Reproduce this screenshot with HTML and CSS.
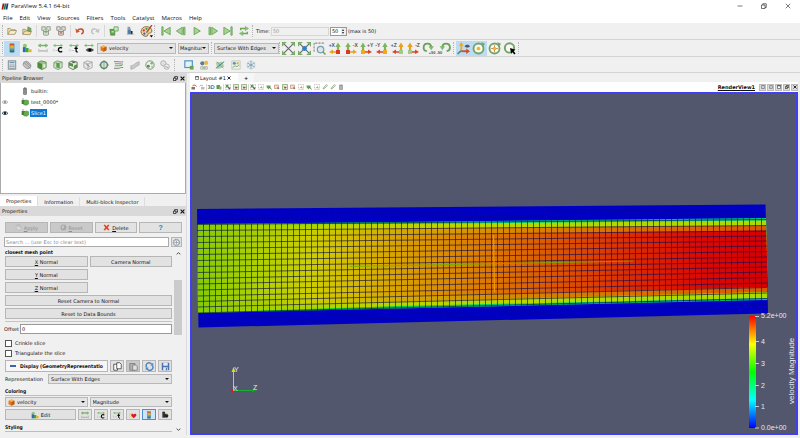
FILE: index.html
```html
<!DOCTYPE html>
<html lang="en">
<head>
<meta charset="utf-8">
<title>ParaView 5.4.1 64-bit</title>
<link rel="stylesheet" href="styles.css">
</head>
<body>
<svg class="defs" aria-hidden="true">
  <defs>
    <linearGradient id="rainbow" x1="0" y1="1" x2="0" y2="0">
      <stop offset="0" stop-color="#0000ff"/><stop offset=".25" stop-color="#00ffff"/><stop offset=".5" stop-color="#00ff00"/><stop offset=".75" stop-color="#ffff00"/><stop offset="1" stop-color="#ff0000"/>
    </linearGradient>
    <linearGradient id="barfill" x1="0" y1="0" x2="0" y2="1">
      <stop offset="0" stop-color="#e03020"/><stop offset=".35" stop-color="#f0c020"/><stop offset=".65" stop-color="#40b0a0"/><stop offset="1" stop-color="#2050c0"/>
    </linearGradient>
  </defs>
  <symbol id="logo" viewBox="0 0 12 12"><path d="M2 1h3L3 11H0z" fill="#b01020"/><path d="M5.500 1h3l-2 10h-3z" fill="#208040"/><path d="M9 1h3l-2 10H7z" fill="#203878"/></symbol>
  <symbol id="open" viewBox="0 0 12 12"><path d="M1 10V3h3l1 1.500h5V6" fill="#f6e6b0" stroke="#8a7a50" stroke-width=".8"/><path d="M1 10l2.500-4.500H11.500L9.500 10z" fill="#faeec8" stroke="#8a7a50" stroke-width=".8"/></symbol>
  <symbol id="saveData" viewBox="0 0 12 12"><path d="M1 10V4h3l1 1h5v1" fill="#f6e6b0" stroke="#8a7a50" stroke-width=".8"/><path d="M1 10l2-4h8.500L9.500 10.500z" fill="#f4dfa0" stroke="#8a7a50" stroke-width=".8"/><path d="M7 1l4 2-1 4-3-1z" fill="#7da565" stroke="#557a44" stroke-width=".6"/></symbol>
  <symbol id="connect" viewBox="0 0 12 12"><g fill="#dfe5d8" stroke="#6d7a66" stroke-width=".8"><rect x="1" y="1" width="4" height="4"/><rect x="7" y="1" width="4" height="4"/><path d="M3 5v2h6V5"/><rect x="3" y="7" width="6" height="4" rx="1"/></g><path d="M6 5v4" stroke="#69a151"/></symbol>
  <symbol id="disconnect" viewBox="0 0 12 12"><g fill="#dfe0d8" stroke="#756f68" stroke-width=".8"><rect x="1" y="1" width="4" height="4"/><rect x="7" y="1" width="4" height="4"/><path d="M3 5v2h6V5"/><rect x="3" y="7" width="6" height="4" rx="1"/></g><path d="M4 6l4 4M8 6l-4 4" stroke="#c9604e"/></symbol>
  <symbol id="undo" viewBox="0 0 12 12"><path d="M3 5.500C5 2.500 10 3 10 6.500 10 8 9 9 7.500 9.500" fill="none" stroke="#c84a26" stroke-width="1.800"/><path d="M0.500 3l1 5.500L6 6.500z" fill="#d4552c"/></symbol>
  <symbol id="redo" viewBox="0 0 12 12"><path d="M9 5.500C7 2.500 2 3 2 6.500 2 8 3 9 4.500 9.500" fill="none" stroke="#bdbdbd" stroke-width="1.600"/><path d="M11.500 3l-1 5.500L6 6.500z" fill="#c4c4c4"/></symbol>
  <symbol id="autoApply" viewBox="0 0 12 12"><path d="M1 4h6v7H2z" fill="#65a650" stroke="#3c7a30" stroke-width=".7"/><path d="M6 1h5v5H6z" fill="#cfe8c4" stroke="#4b9140" stroke-width=".8"/><path d="M3 7h3" stroke="#fff"/></symbol>
  <symbol id="find" viewBox="0 0 12 12"><path d="M3 1h3l1 3H3z" fill="#9a9a9a"/><path d="M3 4h4v6H3z" fill="#4a7cb0"/><path d="M7 6h2v4H7z" fill="#222"/><path d="M2 10h9" stroke="#bbb"/></symbol>
  <symbol id="palette" viewBox="0 0 12 12"><path d="M6 1.500c3 0 5 2 5 4s-2 2-3 2 0 3-2.500 3S1 8.500 1 6s2-4.500 5-4.500z" fill="#e8d3a8" stroke="#94693a" stroke-width=".9"/><circle cx="3.500" cy="5" r="1" fill="#c33"/><circle cx="6" cy="3.500" r="1" fill="#36a04a"/><circle cx="4" cy="8" r="1" fill="#2f62b5"/><path d="M11 0L6 7" stroke="#a4502a" stroke-width="1.200"/><path d="M9 9.500h3l-1.500 2z" fill="#000"/></symbol>
  <symbol id="first" viewBox="0 0 12 12"><path d="M1 1h1.500v10H1zM11 1.500v9L3.500 6z" fill="#a9d293" stroke="#579a45" stroke-width=".9"/></symbol>
  <symbol id="prev" viewBox="0 0 12 12"><path d="M7.500 1.500v9L0.500 6zM9 1.500h1.800v9H9z" fill="#a9d293" stroke="#579a45" stroke-width=".9"/></symbol>
  <symbol id="play" viewBox="0 0 12 12"><path d="M2.500 1.500v9L10 6z" fill="#a9d293" stroke="#579a45" stroke-width=".9"/></symbol>
  <symbol id="next" viewBox="0 0 12 12"><path d="M4.500 1.500v9L11.500 6zM1.200 1.500H3v9H1.200z" fill="#a9d293" stroke="#579a45" stroke-width=".9"/></symbol>
  <symbol id="last" viewBox="0 0 12 12"><path d="M9.500 1H11v10H9.500zM1 1.500v9L8.500 6z" fill="#a9d293" stroke="#579a45" stroke-width=".9"/></symbol>
  <symbol id="loop" viewBox="0 0 12 12"><g fill="none" stroke="#6da75a" stroke-width="1.700"><path d="M2 5V3h6M10 7v2H4"/></g><path d="M7.500 0.500L11.500 3l-4 2.500zM4.500 6.500L.5 9l4 2.500z" fill="#8fc47a" stroke="#579a45" stroke-width=".5"/></symbol>
  <symbol id="bar" viewBox="0 0 12 12"><rect x="3.500" y="1" width="5" height="10" fill="url(#barfill)" stroke="#5b6a70" stroke-width=".5"/></symbol>
  <symbol id="editColor" viewBox="0 0 12 12"><circle cx="3.500" cy="3.500" r="2.500" fill="#8bc97a"/><path d="M1 5h3.500v6H1z" fill="#3568b0"/><path d="M4.500 6H8v5H4.500z" fill="#3fa34c"/><path d="M8 7.500h3.500V11H8z" fill="#e8b324"/></symbol>
  <symbol id="rescale" viewBox="0 0 12 12"><path d="M0 3l3-2v1.300h6V1l3 2-3 2V3.700H3V5z" fill="#7fbf68" stroke="#5c9c48" stroke-width=".4"/><path d="M1 7v4M11 7v4M1 9.500h10M3.500 8.500v2M6 8.500v2M8.500 8.500v2" stroke="#9a9a9a" stroke-width=".7"/></symbol>
  <symbol id="rescaleC" viewBox="0 0 12 12"><path d="M0 3l3-2v1.300h6V1l3 2-3 2V3.700H3V5z" fill="#7fbf68"/><path d="M1 7v3M3 9h3" stroke="#aaa" stroke-width=".7"/><path d="M11 6C8 4.500 6.500 6.500 6.500 8.200S8.500 11.500 11 10" fill="none" stroke="#000" stroke-width="1.600"/></symbol>
  <symbol id="rescaleT" viewBox="0 0 12 12"><path d="M0 3l3-2v1.300h6V1l3 2-3 2V3.700H3V5z" fill="#7fbf68"/><path d="M1 7v3M3 9h3" stroke="#aaa" stroke-width=".7"/><path d="M8.500 4v5.500c0 1 1 1.500 2 1M6.500 6.500h4" fill="none" stroke="#000" stroke-width="1.500"/></symbol>
  <symbol id="rescaleV" viewBox="0 0 12 12"><path d="M0 3l3-2v1.300h6V1l3 2-3 2V3.700H3V5z" fill="#7fbf68"/><path d="M2 8.500C4 5 9.500 5 12 8.500 9.500 11.500 4 11.500 2 8.500z" fill="#555"/><circle cx="7" cy="8.300" r="1.800" fill="#000"/></symbol>
  <symbol id="cube" viewBox="0 0 12 12"><path d="M1 3l5-2 5 2v6l-5 2.500L1 9z" fill="#e07a1c"/><path d="M1 3l5-2 5 2-5 2z" fill="#f6b25e"/><path d="M6 5l5-2v6l-5 2.500z" fill="#bf5c10"/></symbol>
  <symbol id="calc" viewBox="0 0 12 12"><rect x="1.500" y="1" width="9" height="10" fill="#dbe4e8" stroke="#70808a" stroke-width="1"/><path d="M3 3h6" stroke="#7895a8" stroke-width="1.500"/><path d="M3 6h6M3 8h6M3 10h6" stroke="#70808a" stroke-width="1" stroke-dasharray="1.500 .7"/></symbol>
  <symbol id="contour" viewBox="0 0 12 12"><ellipse cx="6" cy="6" rx="5" ry="3.800" transform="rotate(40 6 6)" fill="#c6c6c6" stroke="#8e8e8e" stroke-width=".9"/><path d="M2 3l8 7M4 2l7 6" stroke="#929292"/></symbol>
  <symbol id="clip" viewBox="0 0 12 12"><path d="M1 3l4-2 6 1.500V9l-5 2.500L1 9z" fill="#9cc58a" stroke="#528343" stroke-width=".9"/><path d="M1 3l5 1.500v7L1 9z" fill="#4f8b3d"/><path d="M7.500 5h2.500v4H7.500z" fill="#e5efe0"/></symbol>
  <symbol id="slice" viewBox="0 0 12 12"><path d="M1 3l4-2 6 1.500V9l-5 2.500L1 9z" fill="#cfe2c6" stroke="#6a9060" stroke-width=".9"/><path d="M4 3l4 1v6l-4-1z" fill="#5c9c48"/><path d="M1 3l5 1.500 5-2" fill="none" stroke="#6a9060" stroke-width=".7"/></symbol>
  <symbol id="threshold" viewBox="0 0 12 12"><path d="M1 3l4-2 6 1.500V9l-5 2.500L1 9z" fill="#e1eadc" stroke="#52614e" stroke-width=".9"/><path d="M1 3l5 1.500V8L1 6.500zM7 7l4-2v4l-4 2z" fill="#5c8f4d"/><path d="M4 1.500l6 1L6 4z" fill="#3e6336"/></symbol>
  <symbol id="extract" viewBox="0 0 12 12"><path d="M1 3l4-2 6 1.500V9l-5 2.500L1 9z" fill="#e6e6e6" stroke="#9c9c9c" stroke-width=".9"/><path d="M1 3l5 2 5-2.500M6 5v6" fill="none" stroke="#9c9c9c" stroke-width=".9"/><path d="M4 5l4 3" stroke="#777"/></symbol>
  <symbol id="glyph" viewBox="0 0 12 12"><circle cx="6" cy="6" r="4" fill="#d3e3dc" stroke="#5e7c6c" stroke-width="1.400"/><path d="M0 6l2.500-2v4zM12 6L9.500 4v4zM6 0L4 2.500h4zM6 12L4 9.500h4z" fill="#5b8d4c"/><path d="M6 2v8" stroke="#78a0b0"/></symbol>
  <symbol id="stream" viewBox="0 0 12 12"><g fill="none" stroke-width="1.100"><path d="M0 2h5c2 0 3 1 6 0" stroke="#777"/><path d="M1 4.500h5l5 .5M1 7h4l5-.5" stroke="#69a151"/><path d="M0 10h5c2 0 3-1.500 6-1" stroke="#777"/></g></symbol>
  <symbol id="warp" viewBox="0 0 12 12"><path d="M1 7c4 0 5-4 10-5v4c-4 1-5 5-10 5z" fill="#c9c9c9" stroke="#9c9c9c" stroke-width=".7"/></symbol>
  <symbol id="group" viewBox="0 0 12 12"><circle cx="6" cy="6" r="5" fill="#edf1ea" stroke="#678a5c" stroke-width="1"/><circle cx="4" cy="7.500" r="1.700" fill="#4d9147"/><circle cx="8" cy="4" r="1.500" fill="#79b868"/><circle cx="8.500" cy="8" r="1" fill="#aaa"/></symbol>
  <symbol id="level" viewBox="0 0 12 12"><circle cx="4" cy="4" r="3.200" fill="#e0e0e0" stroke="#9c9c9c" stroke-width=".8"/><circle cx="8" cy="8" r="3.200" fill="#ececec" stroke="#9c9c9c" stroke-width=".8"/><path d="M6 8l4 1" stroke="#999"/></symbol>
  <symbol id="selSurf" viewBox="0 0 12 12"><rect x="1" y="1" width="9" height="8" fill="#e6f2fa" stroke="#4d93c4" stroke-width="1.400"/><path d="M7 7h4.500v4.500H7z" fill="#65a650"/></symbol>
  <symbol id="selOver" viewBox="0 0 12 12"><circle cx="4" cy="4" r="2.500" fill="#5b7c96"/><circle cx="8.500" cy="3.500" r="2.500" fill="#e8b84a"/><path d="M2 8h8v3H2z" fill="#e3e8dd" stroke="#909a88" stroke-width=".7"/><path d="M4 9.500h4" stroke="#69a151"/></symbol>
  <symbol id="plot" viewBox="0 0 12 12"><path d="M1 3l8-1 2 6-8 3z" fill="#a8d0a0"/><path d="M1 10L11 2" stroke="#4b829a" stroke-width="1.200"/><path d="M2 2l8 8" stroke="#6d9f62" stroke-width=".8"/></symbol>
  <symbol id="probe" viewBox="0 0 12 12"><path d="M1 1h10v10H1z" fill="#eff3ec" stroke="#a9b3a4" stroke-width=".7"/><circle cx="4" cy="4" r="1.800" fill="#6790a8"/><circle cx="8" cy="4" r="1.500" fill="#d9bb60"/><path d="M2 9l3-2 2 1 3-2" fill="none" stroke="#69a151"/></symbol>
  <symbol id="snow" viewBox="0 0 12 12"><path d="M6 1v10M1.500 3.500l9 5M10.500 3.500l-9 5" stroke="#6f9bb2" stroke-width="1"/><path d="M1.500 3.500L6 1l4.500 2.500v5L6 11 1.500 8.500z" fill="none" stroke="#adc3cf" stroke-width=".8"/></symbol>
  <symbol id="resetCam" viewBox="0 0 12 12"><path d="M2 2l8 8M10 2l-8 8" stroke="#666" stroke-width="1"/><path d="M0 0h4L0 4zM12 0v4L8 0zM0 12V8l4 4zM12 12H8l4-4z" fill="#7fb96b" stroke="#558c43" stroke-width=".4"/></symbol>
  <symbol id="zoomData" viewBox="0 0 12 12"><use href="#resetCam"/><circle cx="6" cy="6" r="2.200" fill="#2c7fc4"/></symbol>
  <symbol id="zoomBox" viewBox="0 0 12 12"><path d="M1 9V1h9" fill="none" stroke="#888" stroke-width="1" stroke-dasharray="2 1"/><circle cx="7" cy="7" r="3" fill="#d8e7ef" stroke="#7f9aa8" stroke-width="1.100"/><path d="M9 9l2.500 2.500" stroke="#69a151" stroke-width="1.400"/></symbol>
  <symbol id="axUp" viewBox="0 0 12 12"><path d="M9 10V5" stroke="currentColor" stroke-width="2.200"/><path d="M6.300 5L9 0.500 11.700 5z" fill="currentColor"/></symbol>
  <symbol id="arrowL" viewBox="0 0 12 12"><path d="M8 10H3" stroke="currentColor" stroke-width="1.500"/><path d="M4 7.500V12L0 10z" fill="currentColor"/></symbol>
  <symbol id="axUpR" viewBox="0 0 12 12"><path d="M3 10V5" stroke="currentColor" stroke-width="2.200"/><path d="M.3 5L3 0.500 5.700 5z" fill="currentColor"/></symbol>
  <symbol id="arrowR" viewBox="0 0 12 12"><path d="M4 10h5" stroke="currentColor" stroke-width="1.500"/><path d="M8 7.500V12l4-2z" fill="currentColor"/></symbol>
  <symbol id="rotR" viewBox="0 0 12 12"><path d="M4.500 8.500A3.500 3.500 0 1 1 8.500 5" fill="none" stroke="#6c9f5c" stroke-width="1.700"/><path d="M6 4h5L8.500 7.500z" fill="#7fb96b"/></symbol>
  <symbol id="rotL" viewBox="0 0 12 12"><path d="M8 8.500A3.500 3.500 0 1 0 4 5" fill="none" stroke="#6c9f5c" stroke-width="1.700"/><path d="M1.500 4h5L4 7.500z" fill="#7fb96b"/></symbol>
  <symbol id="orient" viewBox="0 0 12 12"><path d="M4 8V3" stroke="#eda91f" stroke-width="1.700"/><path d="M1.800 3.500L4 0l2.200 3.500z" fill="#eda91f"/><path d="M4 8.500h5" stroke="#d64a2a" stroke-width="1.700"/><path d="M8.500 6v5L12 8.500z" fill="#d64a2a"/><path d="M4 8l-3.500 3" stroke="#4f8f6b" stroke-width="1.500"/><path d="M7 4c1-2 4-2 5 0-1 1.500-4 1.500-5 0z" fill="#556"/></symbol>
  <symbol id="center" viewBox="0 0 12 12"><circle cx="6" cy="6" r="4.600" fill="#f7f9f4" stroke="#74a367" stroke-width="1.700"/><circle cx="6" cy="6" r="1.700" fill="#eeb82c"/><path d="M8.500 0L12 1.500 10 4.500z" fill="#74a367"/></symbol>
  <symbol id="centerReset" viewBox="0 0 12 12"><use href="#center"/><path d="M6 3v1.500M6 7.500V9M3 6h1.500M7.500 6H9" stroke="#d2783c" stroke-width=".9"/></symbol>
  <symbol id="centerPick" viewBox="0 0 12 12"><circle cx="6" cy="5.500" r="4.300" fill="#f7f9f4" stroke="#74a367" stroke-width="1.800"/><path d="M6.500 5.500l5 1.700-1.700 1 1.800 2.300-1.200 1-1.900-2.300L7.500 11z" fill="#000"/></symbol>
  <symbol id="server" viewBox="0 0 12 12"><path d="M4 2h4v9H4z" fill="#b5b5b5" stroke="#444" stroke-width="1"/><path d="M5 4h2M5 6h2M5 8h2" stroke="#333" stroke-width=".8"/><path d="M6 0v2" stroke="#444"/></symbol>
  <symbol id="source" viewBox="0 0 12 12"><path d="M1 3h5v6H1z" fill="#3e7d30"/><path d="M4 4l4-1 3.500 1v5L8 11 4 10z" fill="#69a94f" stroke="#3e7d30" stroke-width=".7"/><path d="M3 0v4" stroke="#777"/></symbol>
  <symbol id="eye" viewBox="0 0 12 12"><path d="M0 6.500C3 2.500 9 2.500 12 6.500 9 10 3 10 0 6.500z" fill="#fff" stroke="currentColor" stroke-width="1.500"/><circle cx="6" cy="6" r="2.400" fill="currentColor"/></symbol>
  <symbol id="float" viewBox="0 0 12 12"><path d="M4 1.500h7v6H4z" fill="none" stroke="#111" stroke-width="1.800"/><path d="M1 5h6v6H1z" fill="#ddd" stroke="#111" stroke-width="1.800"/></symbol>
  <symbol id="close" viewBox="0 0 12 12"><path d="M1.500 1.500l9 9M10.500 1.500l-9 9" stroke="currentColor" stroke-width="2.600"/></symbol>
  <symbol id="thinClose" viewBox="0 0 12 12"><path d="M1.500 1.500l9 9M10.500 1.500l-9 9" stroke="#333" stroke-width="1.300"/></symbol>
  <symbol id="restore" viewBox="0 0 12 12"><path d="M1 4h7v7H1zM3.500 4V1.500h7V9H8" fill="none" stroke="#333" stroke-width="1.400"/></symbol>
  <symbol id="minimize" viewBox="0 0 12 12"><path d="M1 6h10" stroke="#333" stroke-width="1.300"/></symbol>
  <symbol id="square" viewBox="0 0 12 12"><path d="M1.500 1.500h9v9h-9z" fill="#fff" stroke="#222" stroke-width="1.500"/><path d="M1 2.500h10" stroke="#222" stroke-width="2"/></symbol>
  <symbol id="splitH" viewBox="0 0 12 12"><path d="M1.500 1.500h9v9h-9zM6 1v10" fill="#fff" stroke="#445" stroke-width="1.500"/></symbol>
  <symbol id="splitV" viewBox="0 0 12 12"><path d="M2 1.500h8v9H2zM2 6h8" fill="#fff" stroke="#445" stroke-width="1.500"/></symbol>
  <symbol id="gear" viewBox="0 0 12 12"><circle cx="6" cy="6" r="4" fill="none" stroke="#8d9aa5" stroke-width="1.800" stroke-dasharray="1.600 .7"/><circle cx="6" cy="6" r="3.500" fill="#eef1f3" stroke="#8d9aa5" stroke-width=".8"/><path d="M6 3.500v5M3.500 6h5" stroke="#8d9aa5"/></symbol>
  <symbol id="copy" viewBox="0 0 12 12"><path d="M1 3h5v8H1z" fill="#fff" stroke="#333" stroke-width="1"/><path d="M5 1h4l2 2v6H5z" fill="#fff" stroke="#333" stroke-width="1"/></symbol>
  <symbol id="paste" viewBox="0 0 12 12"><path d="M1 2h7v9H1z" fill="#b0b0b0" stroke="#777" stroke-width="1"/><path d="M5 4h4l2 2v5H5z" fill="#e0e0e0" stroke="#777" stroke-width="1"/></symbol>
  <symbol id="refresh" viewBox="0 0 12 12"><path d="M2 7A4 4 0 0 1 9 3M10 5a4 4 0 0 1-7 4" fill="none" stroke="#4c84bb" stroke-width="1.900"/><path d="M7 4.500L11 5V1zM5 7.500L1 7v4z" fill="#4c84bb"/></symbol>
  <symbol id="disk" viewBox="0 0 12 12"><path d="M1 1h10v10H1z" fill="#4b72ac"/><path d="M3 1h6v4H3zM3 7h6v4H3z" fill="#e4eaf3"/><path d="M6.500 7.500h1.500V11H6.500z" fill="#4b72ac"/></symbol>
  <symbol id="heart" viewBox="0 0 12 12"><path d="M0 3h4l1 1h5v6H0z" fill="#f0d690"/><path d="M7 11L3.500 7C3 4 6 3.500 7 5.500 8 3.500 11.500 4 11 7z" fill="#c91f28"/></symbol>
  <symbol id="bandEdit" viewBox="0 0 12 12"><path d="M2 1h4v9H2z" fill="#333"/><circle cx="8" cy="7" r="3" fill="#222"/><path d="M6 3l4 2" stroke="#e8b84a" stroke-width="1.800"/></symbol>
  <symbol id="globe" viewBox="0 0 12 12"><circle cx="6" cy="6" r="5" fill="#a9a9a9"/><path d="M3 4l3-2 1 4-3 2z" fill="#ccc"/></symbol>
  <symbol id="hand" viewBox="0 0 12 12"><path d="M2 2l2 2V1h1.500v3H7V1h1.500v4L10 4v5L8 11H5L2 7z" fill="#d8d8d8" stroke="#aaa" stroke-width=".7"/></symbol>
  <symbol id="redX" viewBox="0 0 12 12"><path d="M1 2l2-1 3 3 3-3 2 1-3 4 3 4-2 1-3-3-3 3-2-1 3-4z" fill="#dc4728"/></symbol>
  <symbol id="camUndo" viewBox="0 0 12 12"><path d="M1 6h7v5H1z" fill="#777"/><path d="M3 4c3-3 6-2 8 1" fill="none" stroke="#c84a26" stroke-width="2"/></symbol>
  <symbol id="camRedo" viewBox="0 0 12 12"><path d="M4 6h7v5H4z" fill="#bbb"/><path d="M1 5c2-3 5-3 7-1" fill="none" stroke="#aaa" stroke-width="2"/></symbol>
  <symbol id="green" viewBox="0 0 12 12"><path d="M1 2h7v8H1z" fill="#5d9b4c"/><path d="M6 5h5v6H6z" fill="#8fb583"/></symbol>
  <symbol id="selG" viewBox="0 0 12 12"><path d="M1 1h10v10H1z" fill="none" stroke="#999" stroke-width="1.200" stroke-dasharray="2 1"/><path d="M5 5l6 3-3 3z" fill="#444"/><path d="M2 2h5v5H2z" fill="#55a045"/></symbol>
  <symbol id="selR" viewBox="0 0 12 12"><path d="M1 1h10v10H1z" fill="#e6efe3" stroke="#6fa05f" stroke-width="1.400"/><path d="M3 5l7 1-4 4z" fill="#c93a34"/></symbol>
  <symbol id="selN" viewBox="0 0 12 12"><path d="M1 1h10v10H1z" fill="none" stroke="#b0a79c" stroke-width="1.200" stroke-dasharray="2 1"/><path d="M3 8l5-4 1 5z" fill="#b4a77a"/></symbol>
  <symbol id="selT" viewBox="0 0 12 12"><path d="M1 3h8v3L5 11 1 6z" fill="#659f58"/><path d="M7 6l4 5" stroke="#444" stroke-width="1.500"/></symbol>
  <symbol id="selO" viewBox="0 0 12 12"><path d="M1 2h8v7H1z" fill="#f2d9ca" stroke="#c98b6a" stroke-width="1.300"/><path d="M6 6l5 2-3 3z" fill="#677"/></symbol>
  <symbol id="pen" viewBox="0 0 12 12"><path d="M2 10l2-4 5-5 2 2-5 5z" fill="#e8ecdc" stroke="#77906c" stroke-width="1.200"/></symbol>
  <symbol id="bin" viewBox="0 0 12 12"><path d="M3 3h6v8H3zM2 2.500h8M5 1h2" fill="#b0b0b0" stroke="#888" stroke-width="1.200"/></symbol>
  <symbol id="up" viewBox="0 0 12 12"><path d="M1.500 8L6 4l4.500 4" fill="none" stroke="#333" stroke-width="2"/></symbol>
  <symbol id="down" viewBox="0 0 12 12"><path d="M1.500 4L6 8l4.500-4" fill="none" stroke="#333" stroke-width="2"/></symbol>
</svg>

<header class="titlebar">
  <svg class="i10"><use href="#logo"/></svg>
  <h1>ParaView 5.4.1 64-bit</h1>
  <div class="winbtns">
    <button aria-label="Minimize"><svg><use href="#minimize"/></svg></button>
    <button aria-label="Restore"><svg><use href="#restore"/></svg></button>
    <button aria-label="Close"><svg><use href="#thinClose"/></svg></button>
  </div>
</header>
<nav class="menubar">
  <a href="#">File</a><a href="#">Edit</a><a href="#">View</a><a href="#">Sources</a><a href="#">Filters</a><a href="#">Tools</a><a href="#">Catalyst</a><a href="#">Macros</a><a href="#">Help</a>
</nav>

<div class="toolbar">
  <i class="handle"></i>
  <div class="group two"><button><svg><use href="#open"/></svg></button><button><svg><use href="#saveData"/></svg></button></div>
  <i class="sep"></i>
  <div class="group two"><button><svg><use href="#connect"/></svg></button><button><svg><use href="#disconnect"/></svg></button></div>
  <i class="sep"></i>
  <div class="group two"><button><svg><use href="#undo"/></svg></button><button><svg><use href="#redo"/></svg></button></div>
  <i class="sep"></i>
  <div class="group three"><button><svg><use href="#autoApply"/></svg></button><button><svg><use href="#find"/></svg></button><button><svg class="big"><use href="#palette"/></svg></button></div>
  <i class="handle"></i>
  <div class="group six"><button><svg><use href="#first"/></svg></button><button><svg><use href="#prev"/></svg></button><button><svg><use href="#play"/></svg></button><button><svg><use href="#next"/></svg></button><button><svg><use href="#last"/></svg></button><button><svg><use href="#loop"/></svg></button></div>
  <i class="handle"></i>
  <div class="time">
    <label for="time">Time:</label><input id="time" class="timebox" value="50" disabled>
    <span class="spin"><input aria-label="Time step" value="50"><span class="steps"><i class="tri upward"></i><i class="tri"></i></span></span>
    <span>(max is 50)</span>
  </div>
</div>

<div class="toolbar">
  <i class="handle"></i>
  <div class="group sixwide"><button class="on"><svg><use href="#bar"/></svg></button><button><svg><use href="#editColor"/></svg></button><button><svg><use href="#rescale"/></svg></button><button><svg><use href="#rescaleC"/></svg></button><button><svg><use href="#rescaleT"/></svg></button><button><svg><use href="#rescaleV"/></svg></button></div>
  <span class="combo array"><svg><use href="#cube"/></svg><select aria-label="Color array"><option>velocity</option></select></span>
  <span class="combo comp"><select aria-label="Component"><option>Magnitude</option></select></span>
  <i class="handle"></i>
  <span class="combo rep"><select aria-label="Representation mode"><option>Surface With Edges</option></select></span>
  <i class="handle"></i>
  <div class="group eleven">
    <button><svg class="big"><use href="#resetCam"/></svg></button><button><svg class="big"><use href="#zoomData"/></svg></button><button><svg class="big"><use href="#zoomBox"/></svg></button>
    <button class="ax"><svg viewBox="0 0 12 12"><use href="#axUp" class="gr"/><use href="#arrowL" class="or"/><rect x="7" y="8" width="4" height="4" class="re"/></svg><b>+X</b></button>
    <button class="ax r"><svg viewBox="0 0 12 12"><use href="#axUpR" class="gr"/><use href="#arrowR" class="or"/><rect x="1" y="8" width="4" height="4" class="re"/></svg><b>-X</b></button>
    <button class="ax r"><svg viewBox="0 0 12 12"><use href="#axUpR" class="gr"/><use href="#arrowR" class="re"/><rect x="1" y="8" width="4" height="4" class="or"/></svg><b>+Y</b></button>
    <button class="ax"><svg viewBox="0 0 12 12"><use href="#axUp" class="gr"/><use href="#arrowL" class="re"/><rect x="7" y="8" width="4" height="4" class="or"/></svg><b>-Y</b></button>
    <button class="ax"><svg viewBox="0 0 12 12"><use href="#axUp" class="or"/><use href="#arrowL" class="re"/><rect x="7" y="8" width="4" height="4" class="gr"/></svg><b>+Z</b></button>
    <button class="ax r"><svg viewBox="0 0 12 12"><use href="#axUpR" class="or"/><use href="#arrowR" class="re"/><rect x="1" y="8" width="4" height="4" class="gr"/></svg><b>-Z</b></button>
    <button class="ax rot"><svg><use href="#rotR"/></svg><b>+90</b></button>
    <button class="ax rot left"><svg><use href="#rotL"/></svg><b>-90</b></button>
  </div>
  <i class="handle wide"></i>
  <div class="group four"><button class="on"><svg class="big"><use href="#orient"/></svg></button><button class="on"><svg class="big"><use href="#center"/></svg></button><button><svg class="big"><use href="#centerReset"/></svg></button><button><svg class="big"><use href="#centerPick"/></svg></button></div>
  <i class="handle wide"></i>
</div>

<div class="toolbar short">
  <i class="handle"></i>
  <div class="group eleven narrow"><button><svg><use href="#calc"/></svg></button><button><svg><use href="#contour"/></svg></button><button><svg><use href="#clip"/></svg></button><button><svg><use href="#slice"/></svg></button><button><svg><use href="#threshold"/></svg></button><button><svg><use href="#extract"/></svg></button><button><svg><use href="#glyph"/></svg></button><button><svg><use href="#stream"/></svg></button><button><svg><use href="#warp"/></svg></button><button><svg><use href="#group"/></svg></button><button><svg><use href="#level"/></svg></button></div>
  <i class="handle wide"></i>
  <div class="group five"><button><svg><use href="#selSurf"/></svg></button><button><svg><use href="#selOver"/></svg></button><button><svg><use href="#plot"/></svg></button><button><svg><use href="#probe"/></svg></button><button><svg><use href="#snow"/></svg></button></div>
</div>

<main>
  <aside>
    <div class="dockhead"><h2>Pipeline Browser</h2><button aria-label="Float"><svg><use href="#float"/></svg></button><button aria-label="Close"><svg><use href="#close"/></svg></button></div>
    <ul class="pipeline">
      <li><span class="vis"></span><svg><use href="#server"/></svg><span>builtin:</span></li>
      <li><span class="vis dim"><svg><use href="#eye"/></svg></span><svg><use href="#source"/></svg><span>test_0000*</span></li>
      <li><span class="vis"><svg><use href="#eye"/></svg></span><svg><use href="#source"/></svg><span class="picked">Slice1</span></li>
    </ul>
    <div class="tabs"><button class="active">Properties</button><button>Information</button><button>Multi-block Inspector</button></div>
    <div class="dockhead"><h2>Properties</h2><button aria-label="Float"><svg><use href="#float"/></svg></button><button aria-label="Close"><svg><use href="#close"/></svg></button></div>
    <div class="actions">
      <button class="btn off" disabled><svg><use href="#hand"/></svg><u>A</u>pply</button>
      <button class="btn off" disabled><svg><use href="#globe"/></svg><u>R</u>eset</button>
      <button class="btn"><svg><use href="#redX"/></svg><u>D</u>elete</button>
      <button class="btn help">?</button>
    </div>
    <div class="search"><input aria-label="Search" placeholder="Search ... (use Esc to clear text)"><button class="btn" aria-label="Advanced"><svg><use href="#gear"/></svg></button></div>
    <div class="scroll">
      <div class="props">
        <strong class="hint">closest mesh point</strong>
        <div class="normals">
          <button class="btn"><u>X</u>&nbsp;Normal</button><button class="btn">Camera Normal</button>
          <button class="btn first"><u>Y</u>&nbsp;Normal</button>
          <button class="btn first"><u>Z</u>&nbsp;Normal</button>
          <button class="btn full">Reset Camera to Normal</button>
          <button class="btn full">Reset to Data Bounds</button>
        </div>
        <div class="offset"><label for="offset">Offset</label><input id="offset" value="0"></div>
        <label class="check"><input type="checkbox">Crinkle slice</label>
        <label class="check"><input type="checkbox">Triangulate the slice</label>
        <div class="row display"><button class="btn light"><i class="dash"></i>Display (GeometryRepresentatio</button><button class="btn sq"><svg><use href="#copy"/></svg></button><button class="btn sq off"><svg><use href="#paste"/></svg></button><button class="btn sq"><svg><use href="#refresh"/></svg></button><button class="btn sq"><svg><use href="#disk"/></svg></button></div>
        <div class="reprow"><label for="repr">Representation</label><span class="combo"><select id="repr"><option>Surface With Edges</option></select></span></div>
        <h3>Coloring</h3>
        <div class="row pair"><span class="combo"><svg><use href="#cube"/></svg><select aria-label="Coloring array"><option>velocity</option></select></span><span class="combo"><select aria-label="Coloring component"><option>Magnitude</option></select></span></div>
        <div class="row edit"><button class="btn"><svg><use href="#editColor"/></svg>Edit</button><button class="btn sq"><svg><use href="#rescale"/></svg></button><button class="btn sq"><svg><use href="#rescaleC"/></svg></button><button class="btn sq"><svg><use href="#rescaleT"/></svg></button><button class="btn sq"><svg><use href="#heart"/></svg></button><button class="btn sq sel"><svg><use href="#bar"/></svg></button><button class="btn sq"><svg><use href="#bandEdit"/></svg></button></div>
        <h3>Styling</h3>
      </div>
      <div class="bar"><svg><use href="#up"/></svg><div class="track"><div class="thumb"></div></div><svg><use href="#down"/></svg></div>
    </div>
  </aside>

  <section class="work">
    <div class="layouts"><button class="active"><svg><use href="#square"/></svg>Layout #1<svg><use href="#close"/></svg></button><button class="plus">+</button></div>
    <div class="viewbar">
      <button><svg><use href="#camUndo"/></svg></button><button><svg><use href="#camRedo"/></svg></button><i class="sep"></i>
      <button class="three-d">3D</button><button><svg><use href="#green"/></svg></button><i class="sep"></i>
      <button><svg><use href="#selG"/></svg></button><button><svg><use href="#selR"/></svg></button><button><svg><use href="#selR"/></svg></button><i class="sep"></i>
      <button><svg><use href="#selG"/></svg></button><button><svg><use href="#selN"/></svg></button><button><svg><use href="#selT"/></svg></button><button><svg><use href="#selO"/></svg></button><button><svg><use href="#selR"/></svg></button><button><svg><use href="#selO"/></svg></button><button><svg><use href="#selN"/></svg></button><button><svg><use href="#selT"/></svg></button><button><svg><use href="#selN"/></svg></button><button><svg><use href="#pen"/></svg></button><button><svg><use href="#pen"/></svg></button><button><svg><use href="#bin"/></svg></button>
      <strong>RenderView1</strong>
      <div class="viewbtns"><button><svg><use href="#splitH"/></svg></button><button><svg><use href="#splitV"/></svg></button><button><svg><use href="#square"/></svg></button><button><svg><use href="#float"/></svg></button><button><svg><use href="#close"/></svg></button></div>
    </div>
    <div class="render">
      <svg viewBox="192 94 604 339" role="img" aria-label="Velocity magnitude on a slice">
        <defs>
          <linearGradient id="core" gradientUnits="userSpaceOnUse" x1="197" y1="0" x2="767" y2="0">
            <stop offset="0" stop-color="#84cc00"/><stop offset=".1" stop-color="#acd000"/><stop offset=".2" stop-color="#cdce00"/><stop offset=".28" stop-color="#d6b800"/><stop offset=".38" stop-color="#d99a00"/><stop offset=".52" stop-color="#dc7600"/><stop offset=".64" stop-color="#dc5200"/><stop offset=".76" stop-color="#dc2c00"/><stop offset=".88" stop-color="#dc0a00"/><stop offset="1" stop-color="#d60000"/>
          </linearGradient>
          <linearGradient id="outer" gradientUnits="userSpaceOnUse" x1="197" y1="0" x2="767" y2="0">
            <stop offset="0" stop-color="#80cc00"/><stop offset=".1" stop-color="#a4d000"/><stop offset=".3" stop-color="#bdd200"/><stop offset="1" stop-color="#aadc00"/>
          </linearGradient>
          <linearGradient id="mid" gradientUnits="userSpaceOnUse" x1="197" y1="0" x2="767" y2="0">
            <stop offset="0" stop-color="#84cc00"/><stop offset=".2" stop-color="#c8ce00"/><stop offset=".38" stop-color="#d2a600"/><stop offset=".6" stop-color="#d88000"/><stop offset="1" stop-color="#dc5800"/>
          </linearGradient>
          <linearGradient id="edge" gradientUnits="userSpaceOnUse" x1="197" y1="0" x2="767" y2="0">
            <stop offset="0" stop-color="#60c800"/><stop offset=".2" stop-color="#00c820"/><stop offset=".5" stop-color="#00d070"/><stop offset="1" stop-color="#00cc78"/>
          </linearGradient>
          <pattern id="cols" patternUnits="userSpaceOnUse" x="197" y="0" width="6" height="10"><path d="M.5 0v10" stroke="#101060" stroke-width="1" stroke-opacity=".65"/></pattern>
          <clipPath id="whole"><path d="M197 209L765.500 204.500 768 313.500 198.500 327.500z"/></clipPath>
          <clipPath id="inside"><path d="M197 224L766 218 768 300 198 313z"/></clipPath>
        </defs>
        <path d="M197 209L765.500 204.500 768 313.500 198.500 327.500z" fill="#0000c4"/>
        <path d="M197 224L766 218 768 300 198 313z" fill="url(#edge)"/>
        <path d="M197 224.500L400 224 766 220.500 768 298 400 306 198 312.500z" fill="url(#outer)"/>
        <path d="M197 230L766 225.500 768 292 198 307z" fill="url(#mid)"/>
        <path d="M197 236L766 230.500 768 287 198 301z" fill="url(#core)"/>
        <path d="M197 209L765.500 204.500 768 313.500 198.500 327.500z" fill="url(#cols)" opacity=".4"/>
        <path d="M197 224L766 218 768 300 198 313z" fill="url(#cols)" opacity=".85"/>
        <g clip-path="url(#whole)" stroke="#101060" stroke-opacity=".3" stroke-width="1">
          <path d="M197 214L767 209.500M197 219L767 214M197 318L767 304.500M197 323L767 309"/>
        </g>
        <g clip-path="url(#inside)" stroke="#101060" stroke-opacity=".65" stroke-width="1">
          <path d="M197 224.500L767 219.500M197 230.500L767 225.500M197 236.500L767 231M197 242.500L767 236M197 248.500L767 241M197 254.500L767 246M197 260.500L767 251.500M197 266.500L767 257M197 272.500L767 262M197 278.500L767 267M197 284L767 272M197 290L767 277.500M197 296L767 283M197 301.500L767 287.500M197 307L767 293M197 313L767 298.500"/>
        </g>
        <path d="M350 266.500L633 261" stroke="#64b400" stroke-width="1" stroke-opacity=".8"/>
        <path d="M493.500 235l1 57" stroke="#e89a00" stroke-width="1.200"/>
        <rect x="749" y="316" width="7" height="112" fill="url(#rainbow)"/>
        <path d="M755 316.500h4M755 341.500h4M755 363.500h4M755 385.500h4M755 406.500h4M755 428h4" stroke="#e8e8ee" stroke-width=".8"/>
        <g class="ticks"><text x="761" y="318">5.2e+00</text><text x="761" y="344">4</text><text x="761" y="366">3</text><text x="761" y="388">2</text><text x="761" y="409">1</text><text x="761" y="430">0.0e+00</text></g>
        <text class="legend" transform="translate(794 404) rotate(-90)">velocity Magnitude</text>
        <path d="M233.500 390V372" stroke="#d8d020" stroke-width="1"/><path d="M231.500 372l2-5 2 5z" fill="#e0d820"/>
        <path d="M233 390.500h20" stroke="#18b030" stroke-width="1"/><path d="M252 388.500l5 2-5 2z" fill="#10a020"/>
        <circle cx="232.500" cy="391" r="1.500" fill="#f01010"/>
        <g class="ticks"><text x="234" y="372">Y</text><text x="253" y="390">Z</text><text x="233" y="391">X</text></g>
      </svg>
    </div>
  </section>
</main>
</body>
</html>
```

FILE: styles.css
```css
* { box-sizing: border-box; }
body {
  margin: 0;
  height: 100vh;
  display: flex;
  flex-direction: column;
  overflow: hidden;
  background: #f0f0f0;
  color: #111;
  font: 5px/8px "DejaVu Sans", "Open Sans", sans-serif;
}
h1, h2, h3, ul { margin: 0; padding: 0; font-size: inherit; font-weight: normal; }
button, input, select { font: inherit; color: inherit; margin: 0; padding: 0; border: 0; background: none; border-radius: 0; }
svg { display: block; flex: none; width: 7px; height: 7px; }
.defs { position: absolute; width: 0; height: 0; }

.titlebar { display: flex; align-items: center; height: 12px; padding-left: 1px; gap: 2px; background: #fff; font: 6px/8px "Open Sans", sans-serif; }
.titlebar .i10 { width: 8px; height: 7px; }
.winbtns { margin-left: auto; display: flex; }
.winbtns button { width: 24px; height: 12px; display: grid; place-items: center; }
.winbtns svg { width: 6px; height: 6px; }
.menubar { display: flex; align-items: center; gap: 7px; height: 11px; padding-left: 3px; background: #fff; font: 6px/8px "Open Sans", sans-serif; }
.menubar a { color: inherit; text-decoration: none; }

.toolbar { display: flex; align-items: center; height: 17px; flex: none; border-bottom: 1px solid #d4d4d4; padding-left: 2px; }
.toolbar.short { height: 16px; }
.handle { width: 2px; height: 12px; flex: none; border-left: 1px dotted #b4b4b4; }
.handle.wide { margin: 0 1px; }
.sep { width: 1px; height: 12px; flex: none; margin: 0 1px; background: #d8d8d8; }
.group { display: grid; grid-auto-flow: column; grid-auto-columns: 1fr; flex: none; }
.group button { height: 15px; display: grid; place-items: center; }
.group svg { width: 10px; height: 10px; }
.group svg.big { width: 13px; height: 13px; }
.on { background: #bcdcf4; }
.two { width: 31px; }
.three { width: 48px; }
.six { width: 94px; margin-left: 2px; }
.sixwide { width: 93px; }
.eleven { width: 171px; }
.eleven.narrow { width: 169px; }
.four { width: 61px; }
.five { width: 78px; margin-left: 4px; }
.gr { color: #7fb45f; fill: #9ccc86; }
.or { color: #e6a21e; fill: #eeaa1e; }
.re { color: #d8472a; fill: #dc3a20; }
.group .ax { position: relative; }
.ax svg { width: 12px; height: 12px; }
.ax b { position: absolute; left: 1px; top: 1px; font: bold 5px/6px "Liberation Sans", sans-serif; color: #555; }
.ax.r b { left: auto; right: 1px; }
.ax.rot b { top: 9px; left: auto; right: 1px; font-size: 4px; }
.ax.rot.left b { left: 0; right: auto; }
.group .rot svg { width: 13px; height: 13px; }

.time { display: flex; align-items: center; gap: 1px; margin-left: 2px; }
.timebox { width: 58px; height: 9px; border: 1px solid #d6d6d6; color: #999; padding: 0 1px; }
.spin { display: flex; width: 17px; height: 9px; border: 1px solid #999; background: #fff; }
.spin input { width: 10px; padding-left: 1px; }
.steps { display: grid; align-content: space-evenly; justify-items: center; width: 5px; background: #eee; }
.tri { border: 1px solid transparent; border-top: 2px solid #222; border-bottom: 0; }
.tri.upward { border-top: 0; border-bottom: 2px solid #222; }

.combo { position: relative; display: flex; align-items: center; height: 10px; border: 1px solid #b8b8b8; background: #e4e4e4; padding-left: 2px; gap: 2px; min-width: 0; }
.combo::after { content: ""; position: absolute; right: 2px; top: 3px; border: 2px solid transparent; border-top-color: #111; border-bottom: 0; }
.combo select { appearance: none; flex: 1; min-width: 0; height: 8px; line-height: 8px; margin-right: 6px; }
.toolbar .combo { height: 11px; }
.array { width: 79px; }
.comp { width: 31px; margin: 0 2px; padding-left: 1px; }
.rep { width: 65px; margin-left: 1px; }

main { flex: 1; display: flex; min-height: 0; gap: 3px; padding-bottom: 3px; }
aside { flex: 0 0 187px; display: flex; flex-direction: column; min-height: 0; border-right: 1px solid #dcdcdc; }
.dockhead { display: flex; align-items: center; gap: 2px; height: 10px; flex: none; padding: 0 1px 0 2px; background: #d9d9d9; }
.dockhead h2 { flex: 1; }
.dockhead svg { width: 5px; height: 5px; }
.pipeline { list-style: none; flex: none; height: 111px; border: 1px solid #aaa; border-top: 0; background: #fff; padding-top: 2px; }
.pipeline li { display: flex; align-items: center; height: 11px; }
.pipeline li > svg { width: 8px; height: 8px; margin-right: 1px; }
.pipeline li > span:last-child { padding: 0 1px; }
.vis { width: 20px; padding-left: 1px; color: #123; }
.vis svg { width: 6px; height: 6px; }
.vis.dim { color: #999; }
.pipeline .picked { background: #0a78d7; color: #fff; }
.tabs { display: flex; align-items: flex-end; height: 12px; flex: none; }
.tabs button { height: 9px; padding: 0 6px; border-right: 1px solid #ddd; }
.tabs .active { background: #fff; height: 10px; }

.btn { display: flex; align-items: center; justify-content: center; gap: 2px; height: 11px; background: #e2e2e2; border: 1px solid #b6b6b6; white-space: nowrap; }
.btn u { margin-right: -2px; text-underline-offset: 1px; }
.normals .btn { gap: 0; }
.normals .btn u { margin-right: 0; }
.btn.off { background: #c9c9c9; color: #8e8e8e; }
.btn svg { width: 7px; height: 7px; }
.actions { display: grid; grid-template-columns: repeat(4, 1fr); gap: 2px; padding: 6px 4px 4px 5px; flex: none; }
.help { color: #1e7fb8; font: bold 7px/8px "Liberation Sans", sans-serif; }
.search { display: flex; gap: 2px; padding: 0 4px; flex: none; }
.search input { flex: 1; min-width: 0; height: 10px; border: 1px solid #aaa; background: #fff; padding: 0 1px; }
.search input::placeholder { color: #888; opacity: 1; }
.search .btn { width: 11px; height: 10px; }
.search .btn svg { width: 9px; height: 9px; }
.scroll { flex: 1; min-height: 0; display: flex; gap: 2px; padding: 1px 4px 3px 5px; }
.props { flex: 1; min-width: 0; display: flex; flex-direction: column; }
strong, h3, .display .light { font-family: "DejaVu Sans Condensed", "Open Sans", sans-serif; }
.hint { line-height: 8px; }
.normals { display: grid; grid-template-columns: 1fr 1fr; gap: 2px; padding-bottom: 2px; border-bottom: 1px solid #c4c4c4; }
.normals .first { grid-column: 1; }
.normals .full { grid-column: 1 / -1; }
.offset { display: flex; align-items: center; margin: 2px 0 4px; gap: 1px; }
.offset label { margin-left: -1px; }
.offset input { flex: 1; min-width: 0; height: 10px; border: 1px solid #999; background: #fff; padding: 0 1px; }
.check { display: flex; align-items: center; gap: 3px; height: 10px; }
.check input { appearance: none; width: 7px; height: 7px; border: 1px solid #555; background: #fff; }
.row { display: flex; gap: 2px; }
.row .sq { width: 14px; flex: none; }
.display { margin-top: 2px; }
.display .btn { height: 12px; }
.display .btn:first-child, .edit .btn:first-child { flex: 1; min-width: 0; }
.display .light { background: #f6f6f6; font-weight: bold; overflow: hidden; gap: 4px; }
.display .sq svg { width: 9px; height: 9px; }
.edit { margin-bottom: 2px; }
.edit .btn svg { width: 8px; height: 8px; }
.dash { width: 6px; height: 2px; background: #3f5fb0; }
.reprow { display: flex; align-items: center; gap: 5px; margin: 2px 0; }
.reprow .combo { flex: 1; }
h3 { font-weight: bold; line-height: 8px; border-bottom: 1px solid #bdbdbd; margin-top: 1px; }
.pair { margin: 1px 0 2px; }
.pair .combo { flex: 1; }
.btn.sel { background: #cfe5f7; border-color: #4a90cc; }
.bar { width: 8px; display: flex; flex-direction: column; align-items: center; padding-top: 3px; }
.bar svg { width: 5px; height: 5px; }
.track { flex: 1; width: 100%; display: grid; grid-template-rows: 24fr 55fr 91fr; }
.thumb { grid-row: 2; background: #cbcbcb; }

.work { flex: 1; min-width: 0; display: flex; flex-direction: column; padding-right: 2px; }
.layouts { display: flex; height: 9px; flex: none; }
.layouts button { display: flex; align-items: center; gap: 1px; padding: 0 5px; }
.layouts .active { background: #fff; padding: 0 7px 0 5px; }
.layouts svg { width: 4px; height: 4px; }
.layouts .plus { background: #f6f6f6; padding: 0 6px; font-weight: bold; }
.viewbar { display: flex; align-items: center; height: 10px; flex: none; background: #fff; }
.viewbar > button { width: 8px; display: grid; place-items: center; }
.viewbar > button svg { width: 6px; height: 6px; }
.viewbar .sep { margin: 0; height: 7px; }
.viewbar strong { margin-left: auto; margin-right: 4px; text-decoration: underline; font-family: "DejaVu Sans", sans-serif; }
.viewbtns { display: flex; gap: 1px; }
.viewbtns button { width: 7px; height: 7px; display: grid; place-items: center; background: #ddd; border: 1px solid #bbb; }
.viewbtns svg { width: 4px; height: 4px; }
.render { flex: 1; min-height: 0; border: 2px solid #4040f0; background: #52576e; }
.render svg { width: 100%; height: 100%; }
.ticks { font: 7px "Liberation Sans", sans-serif; fill: #e8e8ee; }
.legend { font: 8px "Liberation Sans", sans-serif; fill: #e8e8ee; }
```
